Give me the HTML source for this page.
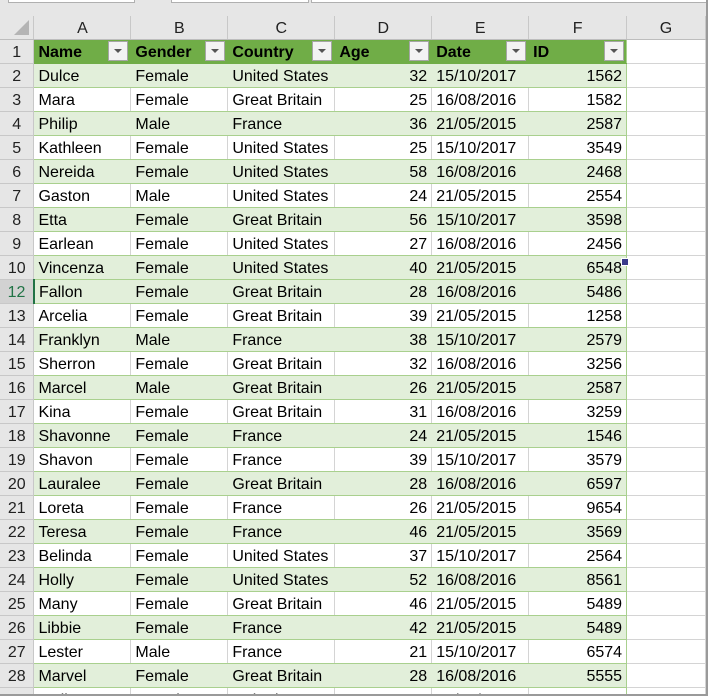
<!DOCTYPE html>
<html><head><meta charset="utf-8"><style>
html,body{margin:0;padding:0;width:708px;height:696px;overflow:hidden;background:#e6e6e6;}
body{position:relative;font-family:"Liberation Sans",Arial,sans-serif;font-size:16px;color:#000;}
.top{position:absolute;left:0;top:0;width:708px;height:16px;background:#e6e6e6;}
.top div{position:absolute;top:0;height:2px;background:#fff;border-bottom:1px solid #b0b0b0;border-left:1px solid #b0b0b0;border-right:1px solid #b0b0b0;}
.wrap{position:absolute;left:0;top:16px;width:706px;height:678px;overflow:hidden;background:#fff;}
table{border-collapse:collapse;table-layout:fixed;}
td{height:21px;padding:2px 4px 0 4px;border-right:1px solid #d4d4d4;border-bottom:1px solid #d4d4d4;white-space:nowrap;overflow:hidden;line-height:21px;}
td.h{background:#e6e6e6;text-align:center;color:#222;padding:2px 0 0 0;border-right:1px solid #c8c8c8;border-bottom:1px solid #c8c8c8;font-size:16px;}
tr.ch td{background:#e6e6e6;text-align:center;border-right:1px solid #c8c8c8;border-bottom:1px solid #bdbdbd;color:#222;}
tr.g td.d{background:#70ad47;font-weight:bold;position:relative;border-right:1px solid #70ad47;border-bottom:1px solid #70ad47;}
tr.b td.d{background:#e2efda;border-right:1px solid #e2efda;border-bottom:1px solid #a9d08e;}
tr.w td.d{border-bottom:1px solid #a9d08e;}
td.f{border-right:1px solid #a9d08e !important;}
td.r{text-align:right;}
.dd{position:absolute;right:2px;top:1px;width:18px;height:18px;border:1px solid #a6a6a6;background:#f3f3f3;}
.dd:after{content:"";position:absolute;left:5px;top:7px;border-left:4px solid transparent;border-right:4px solid transparent;border-top:4px solid #555;}
.sel{background:#d2d2d2 !important;color:#217346 !important;border-right:2px solid #217346 !important;}
.corner{position:relative;}
.corner:after{content:"";position:absolute;right:4px;bottom:4px;border-left:15px solid transparent;border-bottom:15px solid #b4b4b4;}
.hnd{position:absolute;left:621px;top:258px;width:6px;height:6px;background:#3a3a8a;border:1px solid #fff;}
.rb{position:absolute;left:706px;top:0;width:2px;height:696px;background:#9a9a9a;}
.bb{position:absolute;left:0;top:694px;width:708px;height:2px;background:#9a9a9a;}
</style></head><body>
<div class="top"><div style="left:8px;width:125px"></div><div style="left:171px;width:136px"></div><div style="left:311px;width:397px"></div></div>
<div class="wrap">
<table>
<colgroup><col style="width:34px"><col style="width:97px"><col style="width:97px"><col style="width:107px"><col style="width:97px"><col style="width:97px"><col style="width:98px"><col style="width:79px"></colgroup>
<tr class="ch"><td class="corner"></td><td>A</td><td>B</td><td>C</td><td>D</td><td>E</td><td>F</td><td>G</td></tr>
<tr class="g"><td class="h">1</td><td class="d">Name<span class="dd"></span></td><td class="d">Gender<span class="dd"></span></td><td class="d">Country<span class="dd"></span></td><td class="d">Age<span class="dd"></span></td><td class="d">Date<span class="dd"></span></td><td class="d f">ID<span class="dd"></span></td><td></td></tr>
<tr class="b"><td class="h">2</td><td class="d">Dulce</td><td class="d">Female</td><td class="d">United States</td><td class="d r">32</td><td class="d">15/10/2017</td><td class="d r f">1562</td><td></td></tr>
<tr class="w"><td class="h">3</td><td class="d">Mara</td><td class="d">Female</td><td class="d">Great Britain</td><td class="d r">25</td><td class="d">16/08/2016</td><td class="d r f">1582</td><td></td></tr>
<tr class="b"><td class="h">4</td><td class="d">Philip</td><td class="d">Male</td><td class="d">France</td><td class="d r">36</td><td class="d">21/05/2015</td><td class="d r f">2587</td><td></td></tr>
<tr class="w"><td class="h">5</td><td class="d">Kathleen</td><td class="d">Female</td><td class="d">United States</td><td class="d r">25</td><td class="d">15/10/2017</td><td class="d r f">3549</td><td></td></tr>
<tr class="b"><td class="h">6</td><td class="d">Nereida</td><td class="d">Female</td><td class="d">United States</td><td class="d r">58</td><td class="d">16/08/2016</td><td class="d r f">2468</td><td></td></tr>
<tr class="w"><td class="h">7</td><td class="d">Gaston</td><td class="d">Male</td><td class="d">United States</td><td class="d r">24</td><td class="d">21/05/2015</td><td class="d r f">2554</td><td></td></tr>
<tr class="b"><td class="h">8</td><td class="d">Etta</td><td class="d">Female</td><td class="d">Great Britain</td><td class="d r">56</td><td class="d">15/10/2017</td><td class="d r f">3598</td><td></td></tr>
<tr class="w"><td class="h">9</td><td class="d">Earlean</td><td class="d">Female</td><td class="d">United States</td><td class="d r">27</td><td class="d">16/08/2016</td><td class="d r f">2456</td><td></td></tr>
<tr class="b"><td class="h">10</td><td class="d">Vincenza</td><td class="d">Female</td><td class="d">United States</td><td class="d r">40</td><td class="d">21/05/2015</td><td class="d r f">6548</td><td></td></tr>
<tr class="b"><td class="h sel">12</td><td class="d">Fallon</td><td class="d">Female</td><td class="d">Great Britain</td><td class="d r">28</td><td class="d">16/08/2016</td><td class="d r f">5486</td><td></td></tr>
<tr class="w"><td class="h">13</td><td class="d">Arcelia</td><td class="d">Female</td><td class="d">Great Britain</td><td class="d r">39</td><td class="d">21/05/2015</td><td class="d r f">1258</td><td></td></tr>
<tr class="b"><td class="h">14</td><td class="d">Franklyn</td><td class="d">Male</td><td class="d">France</td><td class="d r">38</td><td class="d">15/10/2017</td><td class="d r f">2579</td><td></td></tr>
<tr class="w"><td class="h">15</td><td class="d">Sherron</td><td class="d">Female</td><td class="d">Great Britain</td><td class="d r">32</td><td class="d">16/08/2016</td><td class="d r f">3256</td><td></td></tr>
<tr class="b"><td class="h">16</td><td class="d">Marcel</td><td class="d">Male</td><td class="d">Great Britain</td><td class="d r">26</td><td class="d">21/05/2015</td><td class="d r f">2587</td><td></td></tr>
<tr class="w"><td class="h">17</td><td class="d">Kina</td><td class="d">Female</td><td class="d">Great Britain</td><td class="d r">31</td><td class="d">16/08/2016</td><td class="d r f">3259</td><td></td></tr>
<tr class="b"><td class="h">18</td><td class="d">Shavonne</td><td class="d">Female</td><td class="d">France</td><td class="d r">24</td><td class="d">21/05/2015</td><td class="d r f">1546</td><td></td></tr>
<tr class="w"><td class="h">19</td><td class="d">Shavon</td><td class="d">Female</td><td class="d">France</td><td class="d r">39</td><td class="d">15/10/2017</td><td class="d r f">3579</td><td></td></tr>
<tr class="b"><td class="h">20</td><td class="d">Lauralee</td><td class="d">Female</td><td class="d">Great Britain</td><td class="d r">28</td><td class="d">16/08/2016</td><td class="d r f">6597</td><td></td></tr>
<tr class="w"><td class="h">21</td><td class="d">Loreta</td><td class="d">Female</td><td class="d">France</td><td class="d r">26</td><td class="d">21/05/2015</td><td class="d r f">9654</td><td></td></tr>
<tr class="b"><td class="h">22</td><td class="d">Teresa</td><td class="d">Female</td><td class="d">France</td><td class="d r">46</td><td class="d">21/05/2015</td><td class="d r f">3569</td><td></td></tr>
<tr class="w"><td class="h">23</td><td class="d">Belinda</td><td class="d">Female</td><td class="d">United States</td><td class="d r">37</td><td class="d">15/10/2017</td><td class="d r f">2564</td><td></td></tr>
<tr class="b"><td class="h">24</td><td class="d">Holly</td><td class="d">Female</td><td class="d">United States</td><td class="d r">52</td><td class="d">16/08/2016</td><td class="d r f">8561</td><td></td></tr>
<tr class="w"><td class="h">25</td><td class="d">Many</td><td class="d">Female</td><td class="d">Great Britain</td><td class="d r">46</td><td class="d">21/05/2015</td><td class="d r f">5489</td><td></td></tr>
<tr class="b"><td class="h">26</td><td class="d">Libbie</td><td class="d">Female</td><td class="d">France</td><td class="d r">42</td><td class="d">21/05/2015</td><td class="d r f">5489</td><td></td></tr>
<tr class="w"><td class="h">27</td><td class="d">Lester</td><td class="d">Male</td><td class="d">France</td><td class="d r">21</td><td class="d">15/10/2017</td><td class="d r f">6574</td><td></td></tr>
<tr class="b"><td class="h">28</td><td class="d">Marvel</td><td class="d">Female</td><td class="d">Great Britain</td><td class="d r">28</td><td class="d">16/08/2016</td><td class="d r f">5555</td><td></td></tr>
<tr class="w"><td class="h">29</td><td class="d">Jodie</td><td class="d">Female</td><td class="d">United States</td><td class="d r">31</td><td class="d">15/10/2017</td><td class="d r f">2543</td><td></td></tr>
</table>
</div>
<div class="hnd"></div>
<div class="rb"></div><div class="bb"></div>
</body></html>
